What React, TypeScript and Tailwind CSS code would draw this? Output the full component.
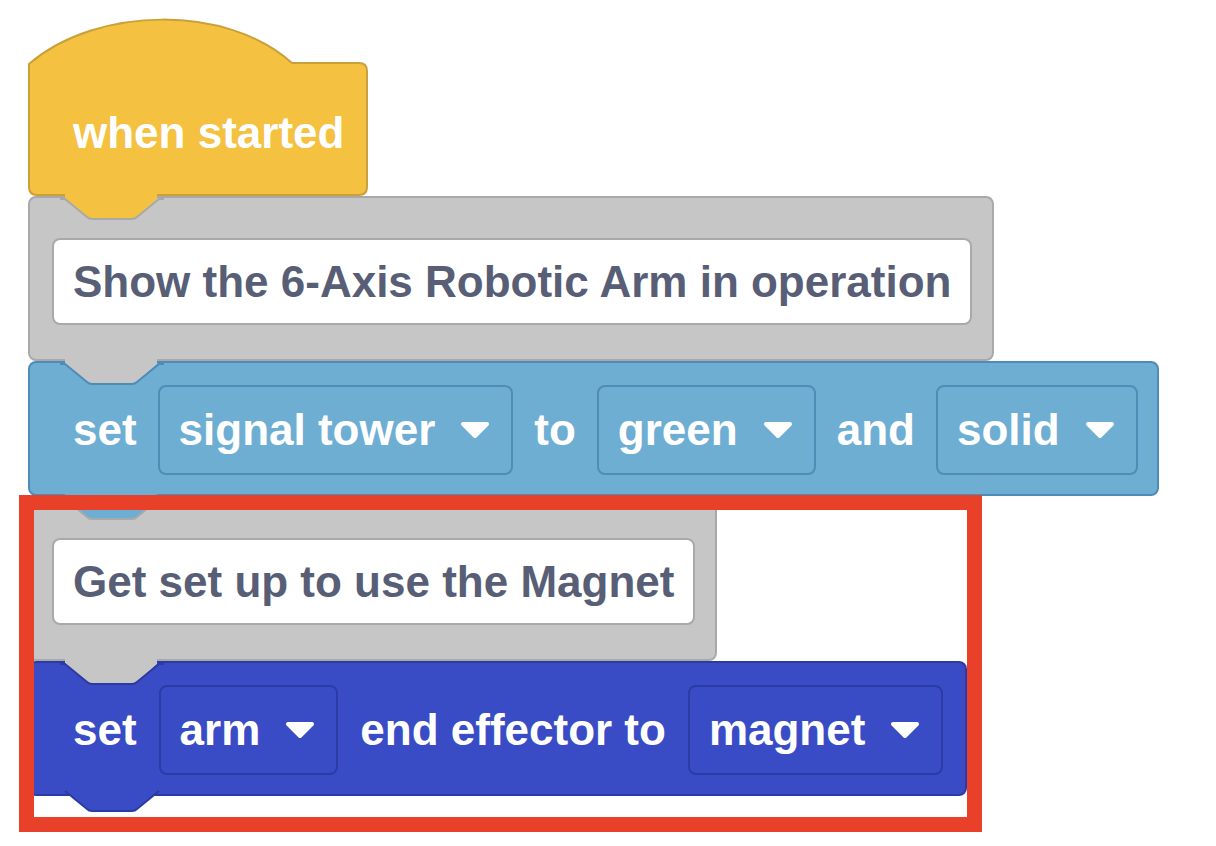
import React from 'react';

// 블록 색상 팔레트
const C = {
  hat: { fill: '#f4c141', stroke: '#c9a03a' },
  note: { fill: '#c6c6c6', stroke: '#a9a9a9' },
  light: { fill: '#6eaed3', stroke: '#4d8cb8', field: '#4f8db8' },
  dark: { fill: '#394cc5', stroke: '#2c3ba3', field: '#2c3ba6' },
};

const font = { fontFamily: '"Liberation Sans", Arial, Helvetica, sans-serif' };

// 위 블록의 탭이 들어가는 홈 (이전 블록 색으로 채움)
function Notch({ prevFill, stroke }: { prevFill: string; stroke: string }) {
  return (
    <svg className="absolute left-[30px] top-[-4px] z-10" width="104" height="32" viewBox="0 0 104 32">
      <path d="M5,0 H97 V5 L77,23 Q75,25 72,25 H32 Q29,25 27,23 L5,5 Z" fill={prevFill} />
      <path
        d="M0,5 H5 L27,23 Q29,25 32,25 H72 Q75,25 77,23 L99,5 H104"
        fill="none"
        stroke={stroke}
        strokeWidth="2"
      />
    </svg>
  );
}

// 마지막 블록 아래로 튀어나온 탭
function Tab({ fill, stroke }: { fill: string; stroke: string }) {
  return (
    <svg className="absolute left-[30px] bottom-[-22px] z-10" width="104" height="28" viewBox="0 0 104 28">
      <path d="M5,0 H99 V3 L77,21 Q75,23 72,23 H32 Q29,23 27,21 L5,3 Z" fill={fill} />
      <path d="M5,3 L27,21 Q29,23 32,23 H72 Q75,23 77,21 L99,3" fill="none" stroke={stroke} strokeWidth="2" />
    </svg>
  );
}

function Arrow() {
  return (
    <svg width="30" height="18" viewBox="0 0 30 18" className="shrink-0">
      <path d="M3,3 H27 L15,15 Z" fill="#ffffff" stroke="#ffffff" strokeWidth="4" strokeLinejoin="round" />
    </svg>
  );
}

function Dropdown({ label, border }: { label: string; border: string }) {
  return (
    <div
      className="flex h-[90px] items-center gap-[25px] rounded-[8px] border-2 pl-[19px] pr-[21px]"
      style={{ borderColor: border }}
    >
      <span className="text-[44px] font-bold leading-none text-white whitespace-nowrap">{label}</span>
      <Arrow />
    </div>
  );
}

function Word({ children }: { children: React.ReactNode }) {
  return <span className="text-[44px] font-bold leading-none text-white whitespace-nowrap">{children}</span>;
}

function Comment({ text, prevFill }: { text: string; prevFill: string }) {
  return (
    <div className="relative flex h-[165px] items-start rounded-[8px] border-2 border-[#a9a9a9] bg-[#c6c6c6] pl-[22px] pr-[20px] pt-[40px]">
      <Notch prevFill={prevFill} stroke={C.note.stroke} />
      <div className="flex h-[87px] items-center rounded-[8px] border-2 border-[#a9a9a9] bg-white px-[19px]">
        <span className="text-[44px] font-bold leading-none text-[#575e75] whitespace-nowrap">{text}</span>
      </div>
    </div>
  );
}

export default function App() {
  return (
    <div className="relative h-[846px] w-[1216px] overflow-hidden bg-white" style={font}>
      <div className="flex flex-col items-start pl-[28px] pt-[18px]">
        {/* when started (hat) */}
        <div className="relative h-[178px] w-[340px]">
          <svg className="absolute inset-0" width="340" height="178" viewBox="0 0 340 178">
            <path
              d="M1,46 C70,-13 200,-13 264,45 H331 Q339,45 339,53 V169 Q339,177 331,177 H9 Q1,177 1,169 Z"
              fill={C.hat.fill}
              stroke={C.hat.stroke}
              strokeWidth="2"
            />
          </svg>
          <div className="relative flex h-full items-center pl-[45px] pt-[52px]">
            <Word>when started</Word>
          </div>
        </div>

        <Comment text="Show the 6-Axis Robotic Arm in operation" prevFill={C.hat.fill} />

        {/* set signal tower */}
        <div className="relative flex h-[135px] items-center gap-[21px] rounded-[8px] border-2 border-[#4d8cb8] bg-[#6eaed3] pl-[43px] pr-[19px] pt-[3px]">
          <Notch prevFill={C.note.fill} stroke={C.light.stroke} />
          <Word>set</Word>
          <Dropdown label="signal tower" border={C.light.field} />
          <Word>to</Word>
          <Dropdown label="green" border={C.light.field} />
          <Word>and</Word>
          <Dropdown label="solid" border={C.light.field} />
        </div>

        <Comment text="Get set up to use the Magnet" prevFill={C.light.fill} />

        {/* set arm end effector */}
        <div className="relative flex h-[135px] items-center gap-[22px] rounded-[8px] border-2 border-[#2c3ba3] bg-[#394cc5] pl-[43px] pr-[22px] pt-[3px]">
          <Notch prevFill={C.note.fill} stroke={C.dark.stroke} />
          <Word>set</Word>
          <Dropdown label="arm" border={C.dark.field} />
          <Word>end effector to</Word>
          <Dropdown label="magnet" border={C.dark.field} />
          <Tab fill={C.dark.fill} stroke={C.dark.stroke} />
        </div>
      </div>

      {/* 강조 표시 */}
      <div className="pointer-events-none absolute left-[19px] top-[495px] z-20 h-[337px] w-[963px] border-[15px] border-[#e9402a]" />
    </div>
  );
}
